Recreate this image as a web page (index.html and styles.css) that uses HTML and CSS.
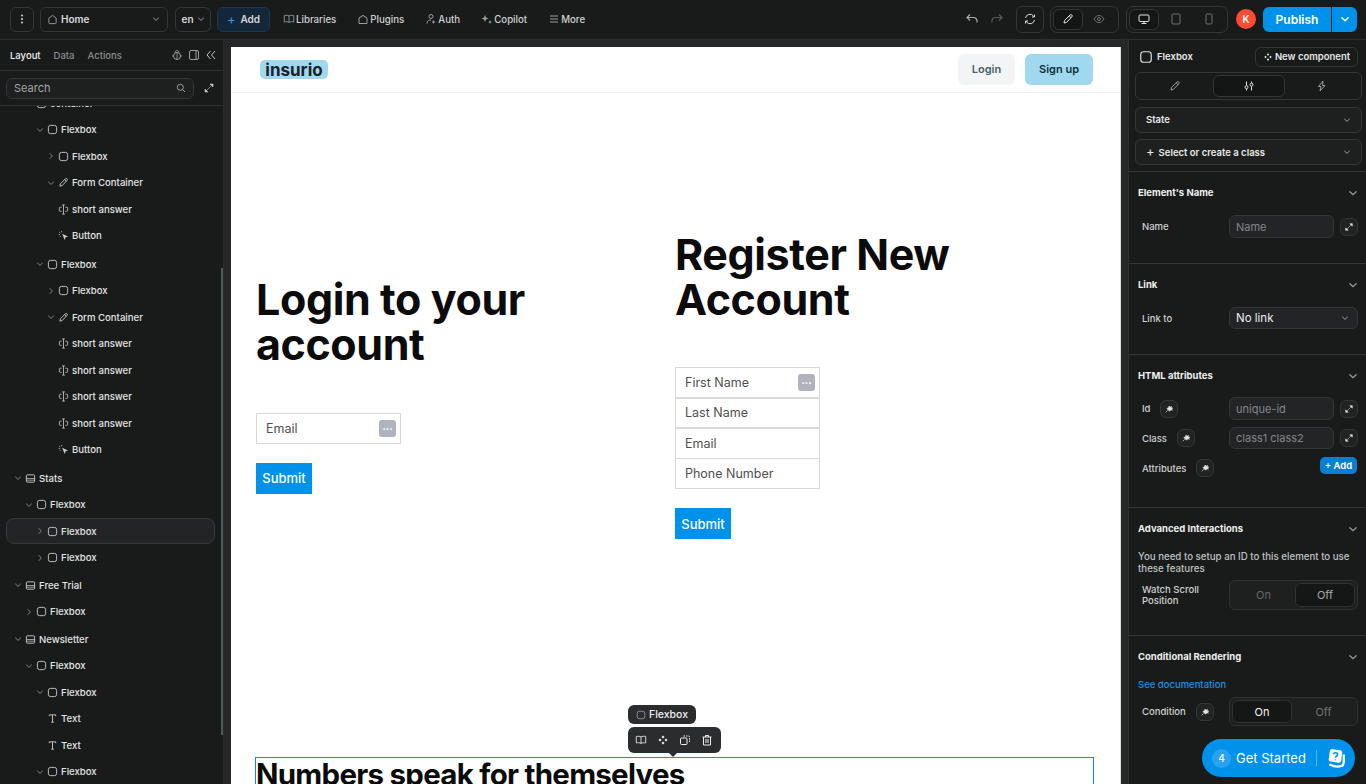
FILE: index.html
```html
<!DOCTYPE html>
<html lang="en">
<head>
<meta charset="utf-8">
<title>Builder</title>
<link rel="stylesheet" href="styles.css">
</head>
<body>
<svg class="defs" width="0" height="0" aria-hidden="true">
  <defs>
    <symbol id="i-box" viewBox="0 0 12 12"><rect x="1.500" y="1.500" width="9" height="9" rx="2.400" fill="none" stroke="currentColor"/></symbol>
    <symbol id="i-down" viewBox="0 0 8 8"><path d="M1.500 3l2.500 2.400L6.500 3" fill="none" stroke="currentColor" stroke-linecap="round"/></symbol>
    <symbol id="i-right" viewBox="0 0 8 8"><path d="M3 1.500L5.400 4 3 6.500" fill="none" stroke="currentColor" stroke-linecap="round"/></symbol>
    <symbol id="i-pen" viewBox="0 0 12 12"><path d="M2 10l.6-2.600L8 2a1.200 1.200 0 0 1 1.800 0 1.200 1.200 0 0 1 0 1.800L4.500 9.400z M7.200 2.900l1.800 1.800" fill="none" stroke="currentColor" stroke-linejoin="round"/></symbol>
    <symbol id="i-comp" viewBox="0 0 12 12"><path d="M6 1.500L7.500 3 6 4.500 4.500 3zM6 7.500L7.500 9 6 10.500 4.500 9zM3 4.500L4.500 6 3 7.500 1.500 6zM9 4.500L10.500 6 9 7.500 7.500 6z" fill="currentColor"/></symbol>
    <symbol id="i-input" viewBox="0 0 12 12"><path d="M6 1v10M4.500 1h3M4.500 11h3M4 3.500H2.500a1 1 0 0 0-1 1v2.500a1 1 0 0 0 1 1H4M8 3.500h1.500a1 1 0 0 1 1 1v2.500a1 1 0 0 1-1 1H8" fill="none" stroke="currentColor" stroke-width=".9"/></symbol>
    <symbol id="i-click" viewBox="0 0 12 12"><path d="M4.500 4l6.500 3-2.700 1L7.300 11z" fill="currentColor"/><path d="M4 1v1.500M1.200 2.200l1.200 1M.8 5h1.500M2 7.500l1-1" fill="none" stroke="currentColor" stroke-width=".8"/></symbol>
    <symbol id="i-section" viewBox="0 0 12 12"><rect x="1.500" y="2" width="9" height="8" rx="1" fill="none" stroke="currentColor"/><path d="M1.500 7.800h9M1.500 6h9" stroke="currentColor" stroke-width=".8"/></symbol>
    <symbol id="i-text" viewBox="0 0 12 12"><path d="M2.500 3.500V2h7v1.500M6 2v8M4.500 10h3" fill="none" stroke="currentColor"/></symbol>
    <symbol id="i-expand" viewBox="0 0 12 12"><path d="M7 2h3v3L7 2zM5 10H2V7l3 3z M8.500 3.500l-5 5" fill="currentColor" stroke="currentColor" stroke-width=".6"/></symbol>
    <symbol id="i-plug" viewBox="0 0 12 12"><path d="M3.500 5.500L6.500 8.500 8.500 7 10 7.500 9 6l1.500-1-2-.2L9 3 7 4 6 2.500 5.800 4.200z M4.500 7.500L2 10" fill="currentColor" stroke="currentColor" stroke-width=".8" stroke-linejoin="round"/></symbol>
    <symbol id="i-book" viewBox="0 0 14 12"><path d="M7 2.500C5.500 1.500 3.500 1.500 1.500 2v7.500C3.500 9 5.500 9 7 10c1.500-1 3.500-1 5.500-.5V2C10.500 1.500 8.500 1.500 7 2.500zM7 2.500V10" fill="none" stroke="currentColor"/></symbol>
  </defs>
</svg>

<header class="topbar">
  <button class="tb-btn tb-menu" type="button"><svg class="ic-12" viewBox="0 0 12 12"><circle cx="6" cy="2.500" r="1" fill="currentColor"/><circle cx="6" cy="6" r="1" fill="currentColor"/><circle cx="6" cy="9.500" r="1" fill="currentColor"/></svg></button>
  <button class="tb-btn tb-home" type="button">
    <svg class="ic-11 dim" viewBox="0 0 12 12"><path d="M6 1.500l4 3v5a1 1 0 0 1-1 1H3a1 1 0 0 1-1-1v-5z" fill="none" stroke="currentColor"/></svg>
    <span class="tb-grow">Home</span>
    <svg class="ic-8 dim"><use href="#i-down"/></svg>
  </button>
  <button class="tb-btn tb-lang" type="button">en <svg class="ic-8 dim"><use href="#i-down"/></svg></button>
  <button class="tb-btn tb-add" type="button"><span class="plus-blue">+</span> Add</button>
  <nav class="tb-links">
    <a class="tb-link"><svg class="ic-12 dim"><use href="#i-book"/></svg>Libraries</a>
    <a class="tb-link"><svg class="ic-12 dim" viewBox="0 0 12 12"><path d="M2 10.500V5l1-1h1.500a1.500 1.500 0 0 1 3 0H9l1 1v5.500z" fill="none" stroke="currentColor"/></svg>Plugins</a>
    <a class="tb-link"><svg class="ic-12 dim" viewBox="0 0 12 12"><circle cx="6" cy="3.500" r="2" fill="none" stroke="currentColor"/><path d="M2 10.500c0-3 2-3.500 4-3.500M8.500 7.500v3M7 9h3" fill="none" stroke="currentColor"/></svg>Auth</a>
    <a class="tb-link"><svg class="ic-12 dim" viewBox="0 0 12 12"><path d="M4 2l1 2.500L7.500 5.500 5 6.500 4 9 3 6.500.5 5.500 3 4.500zM9 7l.6 1.400L11 9l-1.400.6L9 11l-.6-1.400L7 9l1.400-.6z" fill="currentColor"/></svg>Copilot</a>
    <a class="tb-link"><svg class="ic-12 dim" viewBox="0 0 12 12"><path d="M2 3h8M2 6h8M2 9h8" stroke="currentColor"/></svg>More</a>
  </nav>
  <div class="tb-right">
    <svg class="ic-14 undo" viewBox="0 0 14 14"><path d="M5 2.500L2 5.500l3 3M2 5.500h6.500a3.500 3.500 0 0 1 3.500 3.500v1.500" fill="none" stroke="currentColor" stroke-width="1.200"/></svg>
    <svg class="ic-14 redo" viewBox="0 0 14 14"><path d="M9 2.500l3 3-3 3M12 5.500H5.500A3.500 3.500 0 0 0 2 9v1.500" fill="none" stroke="currentColor" stroke-width="1.200"/></svg>
    <button class="tb-btn tb-sync" type="button"><svg class="ic-12" viewBox="0 0 12 12"><path d="M1.500 5a4.500 4.500 0 0 1 8-2l1 1M10.500 7a4.500 4.500 0 0 1-8 2l-1-1M10.500 1.500V4H8M1.500 10.500V8H4" fill="none" stroke="currentColor"/></svg></button>
    <div class="seg seg-mode">
      <span class="seg-item seg-on seg-mode-a"><svg class="ic-12"><use href="#i-pen"/></svg></span>
      <span class="seg-item seg-mode-b"><svg class="ic-12 faint" viewBox="0 0 12 12"><path d="M1 6c1.500-2.500 3-3.500 5-3.500S9.500 3.500 11 6c-1.500 2.500-3 3.500-5 3.500S2.500 8.500 1 6z" fill="none" stroke="currentColor"/><circle cx="6" cy="6" r="1.500" fill="none" stroke="currentColor"/></svg></span>
    </div>
    <div class="seg seg-dev">
      <span class="seg-item seg-on seg-dev-a"><svg class="ic-12" viewBox="0 0 12 12"><rect x="1" y="2" width="10" height="6.500" rx="1" fill="none" stroke="currentColor"/><path d="M3.500 10.500h5M6 8.500v2" stroke="currentColor"/></svg></span>
      <span class="seg-item seg-dev-b"><svg class="ic-12 faint" viewBox="0 0 12 12"><rect x="2" y="1" width="8" height="10" rx="1" fill="none" stroke="currentColor"/></svg></span>
      <span class="seg-item seg-dev-b"><svg class="ic-12 faint" viewBox="0 0 12 12"><rect x="3" y="1" width="6" height="10" rx="1.200" fill="none" stroke="currentColor"/></svg></span>
    </div>
    <span class="avatar">K</span>
    <div class="publish"><span class="publish-main">Publish</span><span class="publish-arrow"><svg class="ic-10" viewBox="0 0 8 8"><path d="M1.500 3l2.500 2.400L6.500 3" fill="none" stroke="currentColor" stroke-width="1.100" stroke-linecap="round"/></svg></span></div>
  </div>
</header>

<main class="workspace">
  <aside class="left">
    <div class="left-tabs">
      <span class="ltab ltab-on">Layout</span>
      <span class="ltab">Data</span>
      <span class="ltab">Actions</span>
      <span class="ltab-icons">
        <svg class="ic-12 dim" viewBox="0 0 12 12"><circle cx="6" cy="7" r="3.500" fill="none" stroke="currentColor"/><path d="M4 3.500a2 2 0 0 1 4 0M6 3.500v7M1 7h2M9 7h2" fill="none" stroke="currentColor" stroke-width=".8"/></svg>
        <svg class="ic-12 dim" viewBox="0 0 12 12"><rect x="1.500" y="1.500" width="9" height="9" rx="1.500" fill="none" stroke="currentColor"/><path d="M8 1.500v9" stroke="currentColor"/></svg>
        <svg class="ic-12 dim2" viewBox="0 0 12 12"><path d="M5.500 2L2 6l3.500 4M10 2L6.500 6l3.500 4" fill="none" stroke="currentColor"/></svg>
      </span>
    </div>
    <div class="left-search">
      <div class="searchbox"><span>Search</span><svg class="ic-10 dim" viewBox="0 0 10 10"><circle cx="4.300" cy="4.300" r="3" fill="none" stroke="currentColor"/><path d="M6.500 6.500l2.500 2.500" stroke="currentColor"/></svg></div>
      <svg class="ic-12 dim2 search-exp"><use href="#i-expand"/></svg>
    </div>
    <div class="tree">
      <div class="tree-inner">
        <div class="row in-2"><span class="car"></span><svg class="ic-11"><use href="#i-box"/></svg><span>container</span></div>
        <div class="row in-3"><svg class="car ic-8"><use href="#i-down"/></svg><svg class="ic-11"><use href="#i-box"/></svg><span>Flexbox</span></div>
        <div class="row in-4"><svg class="car ic-8"><use href="#i-right"/></svg><svg class="ic-11"><use href="#i-box"/></svg><span>Flexbox</span></div>
        <div class="row in-4"><svg class="car ic-8"><use href="#i-down"/></svg><svg class="ic-11"><use href="#i-pen"/></svg><span>Form Container</span></div>
        <div class="row in-4"><span class="car"></span><svg class="ic-11"><use href="#i-input"/></svg><span>short answer</span></div>
        <div class="row in-4"><span class="car"></span><svg class="ic-11"><use href="#i-click"/></svg><span>Button</span></div>
        <div class="row in-3 gap-2"><svg class="car ic-8"><use href="#i-down"/></svg><svg class="ic-11"><use href="#i-box"/></svg><span>Flexbox</span></div>
        <div class="row in-4"><svg class="car ic-8"><use href="#i-right"/></svg><svg class="ic-11"><use href="#i-box"/></svg><span>Flexbox</span></div>
        <div class="row in-4"><svg class="car ic-8"><use href="#i-down"/></svg><svg class="ic-11"><use href="#i-pen"/></svg><span>Form Container</span></div>
        <div class="row in-4"><span class="car"></span><svg class="ic-11"><use href="#i-input"/></svg><span>short answer</span></div>
        <div class="row in-4"><span class="car"></span><svg class="ic-11"><use href="#i-input"/></svg><span>short answer</span></div>
        <div class="row in-4"><span class="car"></span><svg class="ic-11"><use href="#i-input"/></svg><span>short answer</span></div>
        <div class="row in-4"><span class="car"></span><svg class="ic-11"><use href="#i-input"/></svg><span>short answer</span></div>
        <div class="row in-4"><span class="car"></span><svg class="ic-11"><use href="#i-click"/></svg><span>Button</span></div>
        <div class="row in-1 gap-2"><svg class="car ic-8"><use href="#i-down"/></svg><svg class="ic-11"><use href="#i-section"/></svg><span>Stats</span></div>
        <div class="row in-2"><svg class="car ic-8"><use href="#i-down"/></svg><svg class="ic-11"><use href="#i-box"/></svg><span>Flexbox</span></div>
        <div class="row in-3 row-sel"><svg class="car ic-8"><use href="#i-right"/></svg><svg class="ic-11"><use href="#i-box"/></svg><span>Flexbox</span></div>
        <div class="row in-3"><svg class="car ic-8"><use href="#i-right"/></svg><svg class="ic-11"><use href="#i-box"/></svg><span>Flexbox</span></div>
        <div class="row in-1 gap-1"><svg class="car ic-8"><use href="#i-down"/></svg><svg class="ic-11"><use href="#i-section"/></svg><span>Free Trial</span></div>
        <div class="row in-2"><svg class="car ic-8"><use href="#i-right"/></svg><svg class="ic-11"><use href="#i-box"/></svg><span>Flexbox</span></div>
        <div class="row in-1 gap-1"><svg class="car ic-8"><use href="#i-down"/></svg><svg class="ic-11"><use href="#i-section"/></svg><span>Newsletter</span></div>
        <div class="row in-2"><svg class="car ic-8"><use href="#i-down"/></svg><svg class="ic-11"><use href="#i-box"/></svg><span>Flexbox</span></div>
        <div class="row in-3"><svg class="car ic-8"><use href="#i-down"/></svg><svg class="ic-11"><use href="#i-box"/></svg><span>Flexbox</span></div>
        <div class="row in-3"><span class="car"></span><svg class="ic-11"><use href="#i-text"/></svg><span>Text</span></div>
        <div class="row in-3"><span class="car"></span><svg class="ic-11"><use href="#i-text"/></svg><span>Text</span></div>
        <div class="row in-3"><svg class="car ic-8"><use href="#i-down"/></svg><svg class="ic-11"><use href="#i-box"/></svg><span>Flexbox</span></div>
      </div>
    </div>
    <span class="left-scroll"></span>
  </aside>

  <section class="stage">
    <div class="page">
      <div class="site-nav">
        <span class="logo">insurio</span>
        <span class="nav-btns">
          <span class="nav-btn nav-login">Login</span>
          <span class="nav-btn nav-signup">Sign up</span>
        </span>
      </div>
      <div class="forms">
        <div class="form-col">
          <h1 class="form-title">Login to your account</h1>
          <div class="field-list">
            <div class="field">Email<span class="dots">•••</span></div>
          </div>
          <span class="submit">Submit</span>
        </div>
        <div class="form-col">
          <h1 class="form-title">Register New Account</h1>
          <div class="field-list">
            <div class="field field-r">First Name<span class="dots">•••</span></div>
            <div class="field field-r">Last Name</div>
            <div class="field field-r">Email</div>
            <div class="field field-r">Phone Number</div>
          </div>
          <span class="submit">Submit</span>
        </div>
      </div>
      <div class="stats">
        <h2 class="stats-title">Numbers speak for themselves</h2>
      </div>
      <span class="page-scroll"></span>
    </div>
    <div class="float-tag"><svg class="ic-10 dim" viewBox="0 0 12 12"><use href="#i-box"/></svg>Flexbox</div>
    <div class="float-tools">
      <svg class="ic-12"><use href="#i-book"/></svg>
      <svg class="ic-12"><use href="#i-comp"/></svg>
      <svg class="ic-12" viewBox="0 0 12 12"><rect x="1.500" y="4" width="6.500" height="6.500" rx="1" fill="none" stroke="currentColor"/><path d="M4.500 2h5a1 1 0 0 1 1 1v5" fill="none" stroke="currentColor" stroke-dasharray="1.500 1"/></svg>
      <svg class="ic-12" viewBox="0 0 12 12"><path d="M1.500 3h9M4.500 3V1.500h3V3M2.500 3v8h7V3M5 5v4M7 5v4" fill="none" stroke="currentColor"/></svg>
      <span class="tool-arrow"></span>
    </div>
  </section>

  <aside class="right">
    <div class="r-head">
      <svg class="ic-14 r-head-ic"><use href="#i-box"/></svg>
      <span class="r-head-name">Flexbox</span>
      <span class="newcomp"><svg class="ic-10"><use href="#i-comp"/></svg>New component</span>
    </div>
    <div class="r-tabs">
      <span class="r-tab"><svg class="ic-12 dim"><use href="#i-pen"/></svg></span>
      <span class="r-tab r-tab-on"><svg class="ic-12" viewBox="0 0 12 12"><path d="M3.500 1.500v4M3.500 9v1.500M8.500 1.500V3M8.500 6.500v4" stroke="currentColor"/><circle cx="3.500" cy="7.200" r="1.500" fill="none" stroke="currentColor"/><circle cx="8.500" cy="4.700" r="1.500" fill="none" stroke="currentColor"/></svg></span>
      <span class="r-tab"><svg class="ic-12 dim" viewBox="0 0 12 12"><path d="M7 1L2.500 6.500H5L4 11l5-5.500H6.500z" fill="none" stroke="currentColor"/></svg></span>
    </div>
    <div class="r-selects">
      <div class="r-select"><span>State</span><svg class="ic-8 dim"><use href="#i-down"/></svg></div>
      <div class="r-select"><span><span class="r-plus">+</span>Select or create a class</span><svg class="ic-8 dim"><use href="#i-down"/></svg></div>
    </div>

    <section class="sec sec-name">
      <div class="sec-title">Element's Name<svg class="ic-10 dim" viewBox="0 0 8 8"><use href="#i-down"/></svg></div>
      <div class="prop"><span class="prop-label">Name</span><span class="prop-input">Name</span><span class="sq"><svg class="ic-10"><use href="#i-expand"/></svg></span></div>
    </section>

    <section class="sec sec-link">
      <div class="sec-title">Link<svg class="ic-10 dim" viewBox="0 0 8 8"><use href="#i-down"/></svg></div>
      <div class="prop prop-link"><span class="prop-label">Link to</span><span class="prop-select">No link<svg class="ic-8 dim"><use href="#i-down"/></svg></span></div>
    </section>

    <section class="sec sec-html">
      <div class="sec-title">HTML attributes<svg class="ic-10 dim" viewBox="0 0 8 8"><use href="#i-down"/></svg></div>
      <div class="prop prop-id"><span class="prop-label">Id<span class="sq sq-plug"><svg class="ic-10"><use href="#i-plug"/></svg></span></span><span class="prop-input">unique-id</span><span class="sq"><svg class="ic-10"><use href="#i-expand"/></svg></span></div>
      <div class="prop prop-tight"><span class="prop-label">Class<span class="sq sq-plug"><svg class="ic-10"><use href="#i-plug"/></svg></span></span><span class="prop-input">class1 class2</span><span class="sq"><svg class="ic-10"><use href="#i-expand"/></svg></span></div>
      <div class="prop prop-attr"><span class="prop-label">Attributes<span class="sq sq-plug"><svg class="ic-10"><use href="#i-plug"/></svg></span></span><span class="add-btn">+ Add</span></div>
    </section>

    <section class="sec sec-adv">
      <div class="sec-title">Advanced Interactions<svg class="ic-10 dim" viewBox="0 0 8 8"><use href="#i-down"/></svg></div>
      <p class="sec-note">You need to setup an ID to this element to use these features</p>
      <div class="prop"><span class="prop-label prop-wrap">Watch Scroll Position</span><span class="toggle toggle-dim"><span class="tg tg-a">On</span><span class="tg tg-b tg-on">Off</span></span></div>
    </section>

    <section class="sec sec-cond">
      <div class="sec-title">Conditional Rendering<svg class="ic-10 dim" viewBox="0 0 8 8"><use href="#i-down"/></svg></div>
      <a class="sec-doc">See documentation</a>
      <div class="prop"><span class="prop-label">Condition<span class="sq sq-plug"><svg class="ic-10"><use href="#i-plug"/></svg></span></span><span class="toggle toggle-big"><span class="tg tg-a tg-on tg-white">On</span><span class="tg tg-b tg-off">Off</span></span></div>
    </section>
  </aside>
</main>

<div class="started">
  <span class="started-num">4</span>
  <span class="started-text">Get Started</span>
  <span class="started-sep"></span>
  <svg class="started-ic" viewBox="0 0 20 20"><rect x="3" y="1.500" width="12" height="12" rx="2.500" fill="#fff" transform="rotate(8 9 8)"/><path d="M4 16c4 2 8 2 11 1 2-1 2-3 2-10" fill="none" stroke="#fff" stroke-width="2.200" stroke-linecap="round"/><path d="M7 6c.5-2 4-2 4 .3 0 1.500-2 1.500-2 3M9 11v.6" fill="none" stroke="#0091ea" stroke-width="1.500"/></svg>
</div>
</body>
</html>
```

FILE: styles.css
```css
* { box-sizing: border-box; }
html, body { margin: 0; padding: 0; height: 100%; overflow: hidden; }
body {
  width: 1366px; height: 784px; position: relative;
  background: #191b1b; color: #e6e6e6;
  font-family: Inter, "Liberation Sans", sans-serif; font-size: 10px; font-weight: 500;
  display: flex; flex-direction: column;
}
.defs { position: absolute; }
svg { display: block; flex: none; }
.ic-8 { width: 8px; height: 8px; }
.ic-10 { width: 10px; height: 10px; }
.ic-11 { width: 11px; height: 11px; }
.ic-12 { width: 12px; height: 12px; }
.ic-14 { width: 14px; height: 14px; }
.dim { color: #9a9d9e; }
.dim2 { color: #c4c6c6; }
.faint { color: #6f7273; }

/* top bar */
.topbar {
  height: 40px; flex: none; display: flex; align-items: center;
  padding: 0 9px 1px 10px; border-bottom: 1px solid #2e3030;
}
.tb-btn {
  height: 25px; display: flex; align-items: center; justify-content: center; gap: 3px;
  background: transparent; color: #d9dada; border: 1px solid #333636; border-radius: 6px;
  font: 600 10px Inter, sans-serif; padding: 0;
}
.tb-menu { width: 24px; }
.tb-home { width: 128px; margin-left: 6px; padding: 0 7px 0 6px; gap: 3px; }
.tb-grow { flex: 1; text-align: left; }
.tb-lang { width: 36px; margin-left: 7px; }
.tb-add { width: 53px; margin-left: 6px; background: #13273a; border-color: #1b3850; gap: 5px; }
.plus-blue { color: #2a9cf0; font-size: 13px; font-weight: 400; line-height: 10px; }
.tb-links { display: flex; align-items: center; gap: 21px; margin-left: 13px; }
.tb-link { display: flex; align-items: center; gap: 1px; color: #cfd0d0; font-weight: 500; font-size: 9.700px; }
.tb-right { margin-left: auto; display: flex; align-items: center; }
.undo { color: #a9abab; }
.redo { color: #555859; margin-left: 11px; }
.tb-sync { width: 28px; height: 27px; margin-left: 12px; }
.seg { height: 27px; display: flex; align-items: center; border: 1px solid #333636; border-radius: 7px; padding: 2px; margin-left: 6px; }
.seg-item { height: 21px; display: flex; align-items: center; justify-content: center; border-radius: 6px; }
.seg-on { background: #141515; border: 1px solid #333636; }
.seg-mode { width: 69px; }
.seg-mode-a { width: 30px; }
.seg-mode-b { width: 34px; }
.seg-dev { width: 102px; margin-left: 7px; }
.seg-dev-a { width: 30px; }
.seg-dev-b { width: 33px; }
.avatar { width: 20px; height: 20px; border-radius: 50%; background: #ff4b33; color: #fff; display: flex; align-items: center; justify-content: center; font-weight: 600; font-size: 10px; margin-left: 8px; }
.publish { display: flex; height: 25px; margin-left: 7px; color: #fff; }
.publish-main { width: 68px; background: #0091ea; border-radius: 6px 0 0 6px; display: flex; align-items: center; justify-content: center; font-size: 12px; font-weight: 600; }
.publish-arrow { width: 25px; margin-left: 1px; background: #0091ea; border-radius: 0 6px 6px 0; display: flex; align-items: center; justify-content: center; }

.workspace { flex: 1; min-height: 0; display: flex; }

/* left */
.left { width: 224px; flex: none; position: relative; display: flex; flex-direction: column; border-right: 1px solid #2a2c2c; }
.left-tabs { height: 31px; flex: none; display: flex; align-items: center; padding: 0 6px 0 10px; border-bottom: 1px solid #2e3030; gap: 13px; }
.ltab { color: #8a8d8e; font-size: 9.500px; }
.ltab-on { color: #f0f0f0; }
.ltab-icons { margin-left: auto; display: flex; gap: 5px; }
.left-search { height: 35px; flex: none; display: flex; align-items: center; padding: 0 8px 0 6px; border-bottom: 1px solid #2e3030; }
.searchbox { width: 188px; height: 21px; border: 1px solid #333636; border-radius: 6px; background: #1e2020; display: flex; align-items: center; justify-content: space-between; padding: 0 7px; color: #a3a5a6; font-size: 11px; font-weight: 400; }
.search-exp { margin-left: 9px; }
.tree { flex: 1; min-height: 0; overflow: hidden; }
.tree-inner { margin-top: -16.200px; }
.row { height: 26.500px; display: flex; align-items: center; color: #e4e4e4; font-size: 9.600px; }
.row svg { color: #c9cbcb; }
.row > span:last-child { margin-left: 3px; }
.car { width: 8px; height: 8px; flex: none; margin-right: 3px; }
.row svg.car { color: #7f8283; }
.in-1 { padding-left: 14px; }
.in-2 { padding-left: 25px; }
.in-3 { padding-left: 36px; }
.in-4 { padding-left: 47px; }
.gap-2 { margin-top: 2px; }
.gap-1 { margin-top: 1px; }
.row-sel { margin-left: 6px; margin-right: 8px; padding-left: 29px; background: #222426; border: 1px solid #363839; border-radius: 8px; }
.left-scroll { position: absolute; right: 0; top: 228px; width: 2px; height: 467px; background: #4c5a5a; }

/* canvas */
.stage { flex: 1; min-width: 0; position: relative; background: #262728; padding: 7px 7px 0 7px; overflow: hidden; }
.page { height: 100%; background: #fff; position: relative; color: #101010; font-family: Inter, sans-serif; overflow: hidden; }
.site-nav { height: 46px; border-bottom: 1px solid #f0f0f0; display: flex; align-items: center; justify-content: space-between; padding: 0 28px 0 29px; }
.logo { background: #a0d9ef; border-radius: 5px; height: 19px; width: 68px; display: flex; align-items: center; justify-content: center; font-size: 17px; font-weight: 700; color: #1b2228; }
.nav-btns { display: flex; gap: 10px; }
.nav-btn { height: 31px; border-radius: 6px; display: flex; align-items: center; justify-content: center; font-size: 11px; font-weight: 600; padding-bottom: 1px; }
.nav-login { width: 57px; background: #f3f4f6; color: #4a5f66; }
.nav-signup { width: 68px; background: #a0d9ef; color: #12303c; }
.forms { height: 664px; display: grid; grid-template-columns: 419px 419px; padding: 0 0 79px 25px; align-items: center; }
.form-col { display: flex; flex-direction: column; align-items: flex-start; }
.form-title { margin: 0 0 45.500px; font-size: 43px; line-height: 45px; font-weight: 700; letter-spacing: -.400px; width: 300px; color: #0b0b0b; }
.field-list { display: flex; flex-direction: column; }
.field { width: 145px; height: 31px; border: 1px solid #d9d9d9; padding: 0 4px 0 9px; display: flex; align-items: center; justify-content: space-between; font-size: 12.500px; font-weight: 400; color: #4f4f4f; }
.field-r { height: 30.750px; margin-top: -.500px; }
.field-r:first-child { margin-top: 0; }
.dots { width: 17px; height: 17px; background: #aeb3bd; border-radius: 3px; color: #fff; font-size: 6px; display: flex; align-items: center; justify-content: center; letter-spacing: 0; }
.submit { margin-top: 19px; width: 56px; height: 31.500px; background: #0091ea; color: #fff; font-size: 13px; font-weight: 500; display: flex; align-items: center; justify-content: center; }
.stats { margin-left: 24px; width: 839px; height: 60px; border: 1px solid #0091ea; border-bottom: none; }
.stats-title { margin: 0; font-size: 29.500px; line-height: 33px; font-weight: 700; letter-spacing: -.740px; color: #0b0b0b; }
.page-scroll { position: absolute; right: 0; top: 0; bottom: 0; width: 1px; background: #dcdcdc; }
.float-tag { position: absolute; left: 404px; top: 665px; width: 68px; height: 19px; background: #2a2c2e; border-radius: 6px; display: flex; align-items: center; justify-content: center; gap: 3px; color: #f0f0f0; font-size: 10.500px; }
.float-tools { position: absolute; left: 404px; top: 687px; width: 93px; height: 26px; background: #2a2c2e; border-radius: 6px; display: flex; align-items: center; gap: 10px; padding-left: 7px; color: #eee; }
.tool-arrow { position: absolute; left: 41px; top: 26px; border: 4px solid transparent; border-top-color: #2a2c2e; border-bottom: none; }

/* right */
.right { width: 238px; flex: none; border-left: 1px solid #2e3030; position: relative; }
.r-head { height: 32px; display: flex; align-items: center; padding: 1px 8px 0 10px; }
.r-head-ic { color: #e0e0e0; }
.r-head-name { margin-left: 4px; font-weight: 600; color: #e9e9e9; font-size: 9.500px; }
.newcomp { margin-left: auto; width: 103px; height: 20px; border: 1px solid #333636; border-radius: 6px; display: flex; align-items: center; justify-content: center; gap: 2px; color: #e6e6e6; font-size: 9.500px; font-weight: 600; }
.r-tabs { margin: 0 4px 0 6px; height: 28px; border: 1px solid #333636; border-radius: 6px; display: grid; grid-template-columns: 1fr 72px 1fr; padding: 2px; }
.r-tab { display: flex; align-items: center; justify-content: center; border-radius: 6px; }
.r-tab-on { background: #141515; border: 1px solid #333636; }
.r-selects { padding: 7px 4px 6px 6px; display: flex; flex-direction: column; gap: 6px; border-bottom: 1px solid #333636; }
.r-select { height: 26px; background: #1e2020; border: 1px solid #333636; border-radius: 6px; display: flex; align-items: center; justify-content: space-between; padding: 0 10px 1px; font-size: 9.500px; font-weight: 600; color: #e9e9e9; }
.r-plus { font-size: 13px; font-weight: 400; margin-right: 4px; line-height: 10px; }
.sec { border-bottom: 1px solid #333636; padding: 0 8px 0 9px; }
.sec-name { height: 92px; }
.sec-link { height: 91px; }
.sec-html { height: 153px; }
.sec-adv { height: 128px; }
.sec-cond { border-bottom: none; }
.sec-title { height: 41px; display: flex; align-items: center; justify-content: space-between; font-size: 9.500px; font-weight: 700; color: #efefef; }
.prop { display: flex; align-items: center; padding-left: 4px; height: 23px; margin-top: 2px; color: #cfd0d0; }
.prop-link { height: 22px; margin-top: 2px; }
.prop-id { margin-top: 1px; }
.prop-label { width: 87px; display: flex; align-items: center; gap: 10px; font-size: 9.500px; font-weight: 500; flex: none; }
.prop-wrap { line-height: 11px; width: 70px; margin-right: 17px; }
.prop-input { width: 105px; height: 100%; background: #222426; border: 1px solid #333636; border-radius: 6px; padding-left: 6px; display: flex; align-items: center; color: #84878a; font-size: 11px; font-weight: 400; }
.prop-select { width: 129px; height: 100%; background: #222426; border: 1px solid #333636; border-radius: 6px; padding: 0 8px 0 6px; display: flex; align-items: center; justify-content: space-between; color: #eee; font-size: 11.500px; font-weight: 400; }
.sq { width: 18px; height: 18px; margin-left: 6px; border: 1px solid #333636; border-radius: 6px; display: flex; align-items: center; justify-content: center; color: #e4e4e4; flex: none; background: #212323; }
.sq-plug { margin-left: 0; }
.prop-tight { height: 22px; margin-top: 7px; }
.prop-attr { margin-top: 8px; justify-content: space-between; height: 22px; position: relative; }
.add-btn { position: absolute; right: 1px; top: 0; width: 37px; height: 17px; background: #0a7fd0; border-radius: 5px; color: #fff; font-size: 9.500px; font-weight: 600; display: flex; align-items: center; justify-content: center; }
.sec-note { margin: 2px 0 0; color: #bfc1c1; font-size: 9.700px; line-height: 12px; font-weight: 500; }
.sec-adv .prop { height: 30px; margin-top: 5px; }
.toggle { width: 129px; height: 100%; border: 1px solid #2f3232; border-radius: 6px; background: #1e2020; padding: 2px; display: grid; grid-template-columns: 1fr 60px; font-size: 11px; font-weight: 400; }
.tg { display: flex; align-items: center; justify-content: center; border-radius: 6px; color: #62686a; }
.tg-on { background: #151616; border: 1px solid #2f3232; color: #a9abab; }
.tg-white { color: #f4f4f4; }
.tg-off { color: #6f7273; }
.toggle-big { grid-template-columns: 60px 1fr; }
.sec-doc { display: block; color: #1b90e2; font-size: 9.500px; margin-top: 2px; height: 13px; }
.sec-cond .prop { height: 29px; margin-top: 5px; }

/* floating */
.started { position: absolute; left: 1202px; top: 739px; width: 153px; height: 38px; border-radius: 19px; background: #0091ea; display: flex; align-items: center; padding-left: 10px; color: #fff; }
.started-num { width: 19px; height: 19px; border-radius: 50%; background: #2aa3ef; display: flex; align-items: center; justify-content: center; font-size: 10px; }
.started-text { margin-left: 5px; font-size: 13px; font-weight: 400; }
.started-sep { width: 1px; height: 16px; background: #5bb9f2; margin-left: 10px; }
.started-ic { width: 21px; height: 21px; margin-left: 9px; }
```
